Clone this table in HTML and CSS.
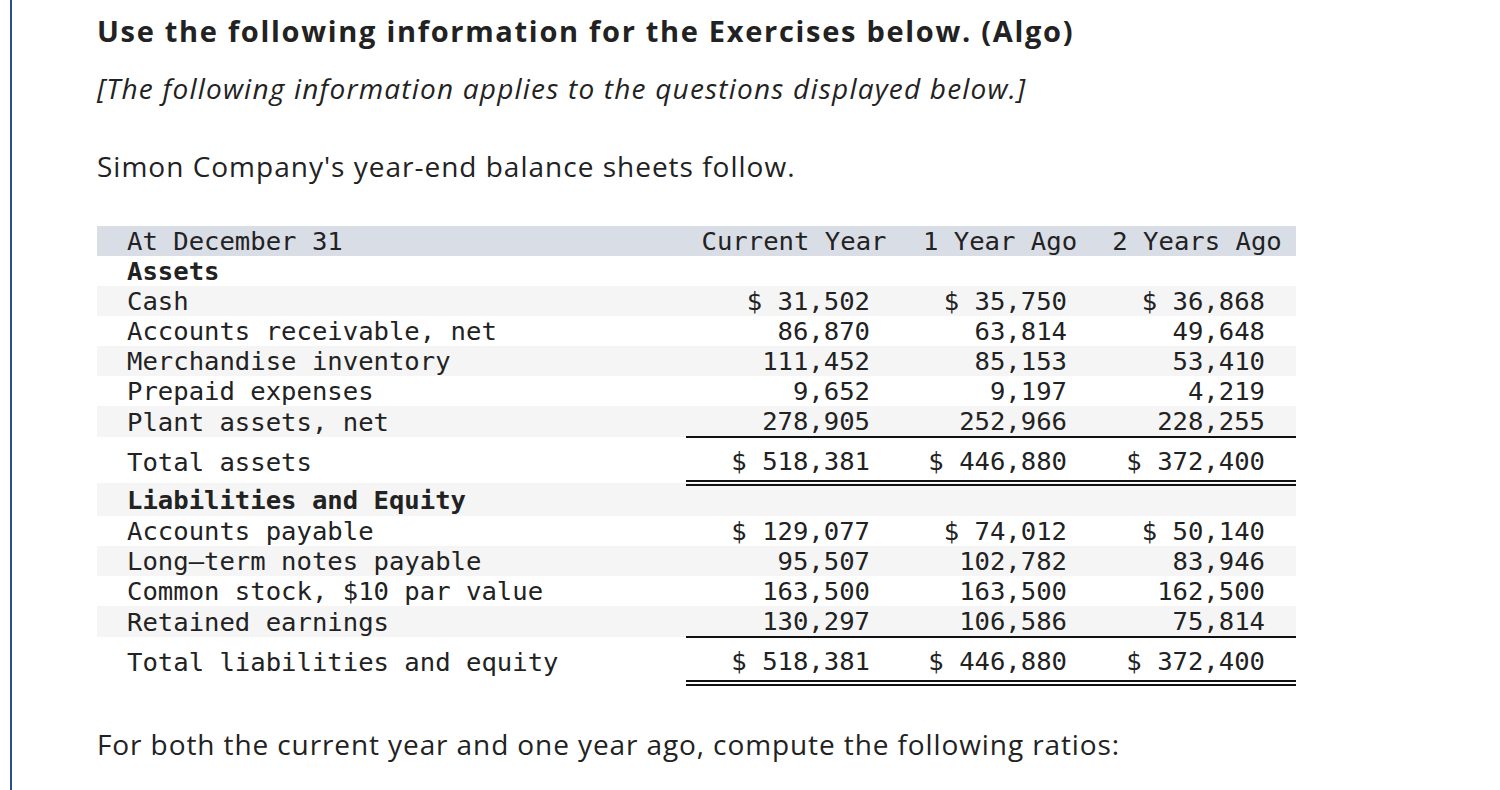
FILE: index.html
```html
<!DOCTYPE html>
<html lang="en">
<head>
<meta charset="utf-8">
<title>Simon Company balance sheets</title>
<link rel="stylesheet" href="styles.css">
</head>
<body>
<div class="page">
  <h1 class="title">Use the following information for the Exercises below. (Algo)</h1>
  <p class="sub">[The following information applies to the questions displayed below.]</p>
  <p class="intro">Simon Company's year-end balance sheets follow.</p>
  <table class="bs">
    <colgroup>
      <col class="c-label"><col class="c-1"><col class="c-2"><col class="c-3">
    </colgroup>
    <thead>
      <tr class="head">
        <th class="lbl">At December 31</th>
        <th>Current Year</th>
        <th>1 Year Ago</th>
        <th>2 Years Ago</th>
      </tr>
    </thead>
    <tbody>
      <tr><td class="lbl sec">Assets</td><td></td><td></td><td></td></tr>
      <tr class="alt"><td class="lbl">Cash</td><td>$ 31,502</td><td>$ 35,750</td><td>$ 36,868</td></tr>
      <tr><td class="lbl">Accounts receivable, net</td><td>86,870</td><td>63,814</td><td>49,648</td></tr>
      <tr class="alt"><td class="lbl">Merchandise inventory</td><td>111,452</td><td>85,153</td><td>53,410</td></tr>
      <tr><td class="lbl">Prepaid expenses</td><td>9,652</td><td>9,197</td><td>4,219</td></tr>
      <tr class="alt last"><td class="lbl">Plant assets, net</td><td>278,905</td><td>252,966</td><td>228,255</td></tr>
      <tr class="total"><td class="lbl">Total assets</td><td>$ 518,381</td><td>$ 446,880</td><td>$ 372,400</td></tr>
      <tr class="alt"><td class="lbl sec">Liabilities and Equity</td><td></td><td></td><td></td></tr>
      <tr><td class="lbl">Accounts payable</td><td>$ 129,077</td><td>$ 74,012</td><td>$ 50,140</td></tr>
      <tr class="alt"><td class="lbl">Long–term notes payable</td><td>95,507</td><td>102,782</td><td>83,946</td></tr>
      <tr><td class="lbl">Common stock, $10 par value</td><td>163,500</td><td>163,500</td><td>162,500</td></tr>
      <tr class="alt last"><td class="lbl">Retained earnings</td><td>130,297</td><td>106,586</td><td>75,814</td></tr>
      <tr class="total"><td class="lbl">Total liabilities and equity</td><td>$ 518,381</td><td>$ 446,880</td><td>$ 372,400</td></tr>
    </tbody>
  </table>
  <p class="outro">For both the current year and one year ago, compute the following ratios:</p>
</div>
</body>
</html>
```

FILE: styles.css
```css
html, body {
  margin: 0;
  padding: 0;
  background: #ffffff;
}

body {
  font-family: "Open Sans", Lato, "Liberation Sans", sans-serif;
  color: #222222;
}

.page {
  margin-left: 10px;
  border-left: 2px solid #2c4f8f;
  min-height: 790px;
  padding: 13px 0 0 85px;
  box-sizing: border-box;
}

.title {
  margin: 0;
  font-size: 29px;
  line-height: 36px;
  font-weight: 700;
  letter-spacing: 1.7px;
}

.sub {
  margin: 21px 0 0;
  font-size: 28px;
  line-height: 36px;
  font-style: italic;
  letter-spacing: 1.2px;
}

.intro {
  margin: 42px 0 0;
  font-size: 28px;
  line-height: 36px;
  letter-spacing: 1px;
}

.bs {
  margin-top: 42px;
  width: 1199px;
  border-collapse: collapse;
  table-layout: fixed;
  font-family: "DejaVu Sans Mono", "Liberation Mono", monospace;
  font-size: 25.6px;
  color: #222222;
}

.c-label { width: 589px; }
.c-1 { width: 216px; }
.c-2 { width: 196px; }
.c-3 { width: 198px; }

.bs th,
.bs td {
  height: 30px;
  padding: 0 31px 0 0;
  line-height: 30px;
  text-align: right;
  white-space: nowrap;
  font-weight: 400;
}

.bs td:nth-child(2) { padding-right: 32px; }

.bs th {
  text-align: center;
  padding: 0;
}

.bs .lbl {
  text-align: left;
  padding-left: 30px;
  padding-right: 0;
}

.head {
  background: #d9dde6;
}

.alt {
  background: #f5f5f5;
}

.sec {
  font-weight: 700 !important;
}

.last td:not(.lbl) {
  border-bottom: 2px solid #111111;
}

.bs .total td {
  height: 42px;
  padding-top: 8px;
  padding-bottom: 4px;
  box-sizing: border-box;
}

.total td:not(.lbl) {
  border-bottom: 6px double #111111;
}

.outro {
  margin: 40px 0 0;
  font-size: 28px;
  line-height: 36px;
  letter-spacing: 0.9px;
}
```
